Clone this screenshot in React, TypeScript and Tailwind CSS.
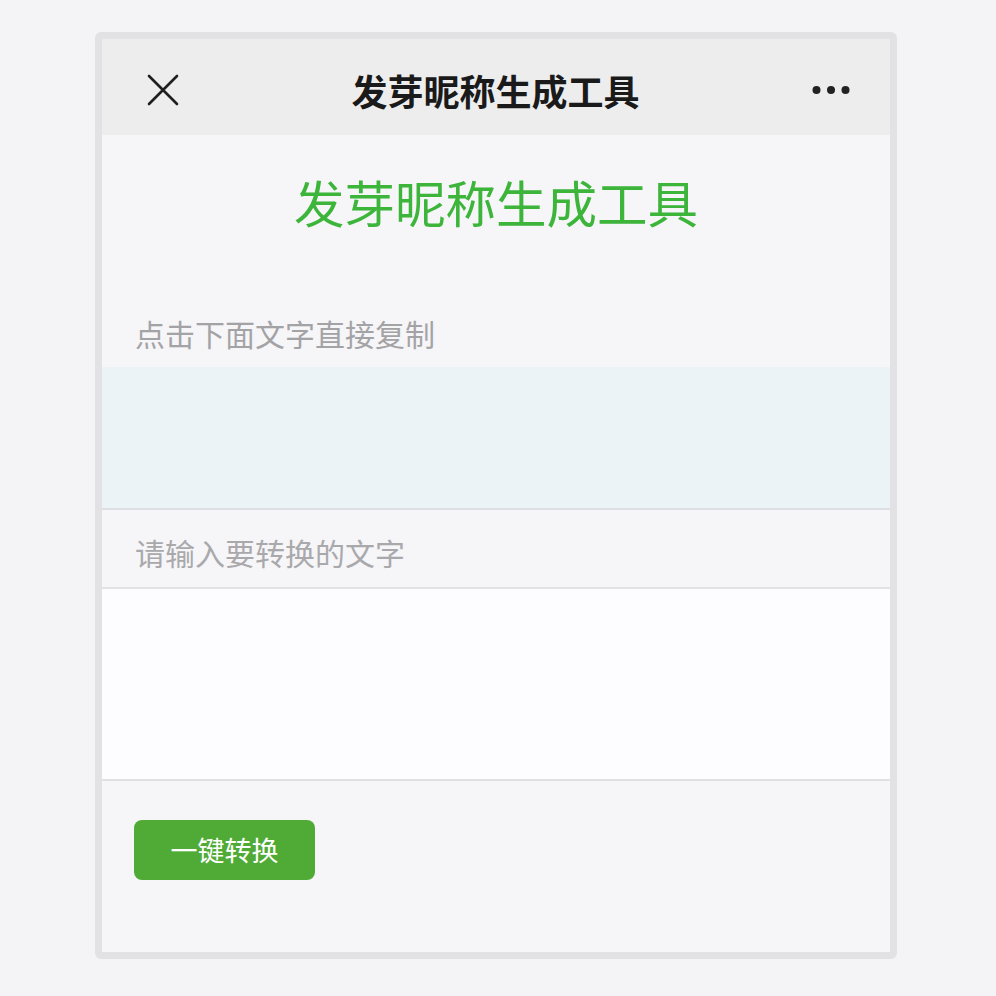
import type { ReactNode } from 'react';

const FONT = { fontFamily: '"Noto Sans CJK SC", "Noto Sans", sans-serif' };

function CloseIcon(): ReactNode {
  return (
    <svg width="32" height="32" viewBox="0 0 32 32" fill="none" stroke="#1f1f1f" strokeWidth="2.6" strokeLinecap="round">
      <path d="M2 2 L30 30 M30 2 L2 30" />
    </svg>
  );
}

function MoreIcon(): ReactNode {
  return (
    <svg width="38" height="10" viewBox="0 0 38 10" fill="#222">
      <circle cx="4.5" cy="5" r="4" />
      <circle cx="19" cy="5" r="4" />
      <circle cx="33.5" cy="5" r="4" />
    </svg>
  );
}

export default function App(): ReactNode {
  return (
    <div className="min-h-screen bg-[#f4f3f6] pl-[95px] pr-[99px] pt-[32px] pb-[37px]" style={FONT}>
      <div className="flex h-[927px] flex-col overflow-hidden rounded-[6px] border-[7px] border-[#e2e2e5] bg-[#f6f5f8]">
        <header className="flex h-[96px] shrink-0 items-center justify-between bg-[#ededee] pl-[45px] pr-[40px] pt-[6px]">
          <CloseIcon />
          <h1 className="text-[36px] font-bold text-[#1a1a1a]">发芽昵称生成工具</h1>
          <MoreIcon />
        </header>

        <div className="flex h-[232px] shrink-0 flex-col">
          <h2 className="mt-[36px] text-center text-[50.5px] leading-[60px] text-[#3cb53a]">发芽昵称生成工具</h2>
          <p className="mt-[81px] pl-[33px] text-[30px] leading-[42px] text-[#a3a3a6]">点击下面文字直接复制</p>
        </div>

        <div className="h-[143px] shrink-0 border-b-2 border-[#dedfe2] bg-[#ebf3f6]" />

        <div className="flex h-[79px] shrink-0 items-center border-b-2 border-[#e2e2e5] pl-[33px] pt-[8px]">
          <span className="text-[30px] text-[#a9a9ac]">请输入要转换的文字</span>
        </div>

        <div className="h-[192px] shrink-0 border-b-2 border-[#e0e0e3] bg-[#fdfcfe]" />

        <div className="flex-1 pl-[32px] pt-[39px]">
          <button
            type="button"
            className="flex h-[60px] w-[181px] items-center justify-center rounded-[8px] bg-[#4fab35] text-[27px] text-white"
          >
            一键转换
          </button>
        </div>
      </div>
    </div>
  );
}
